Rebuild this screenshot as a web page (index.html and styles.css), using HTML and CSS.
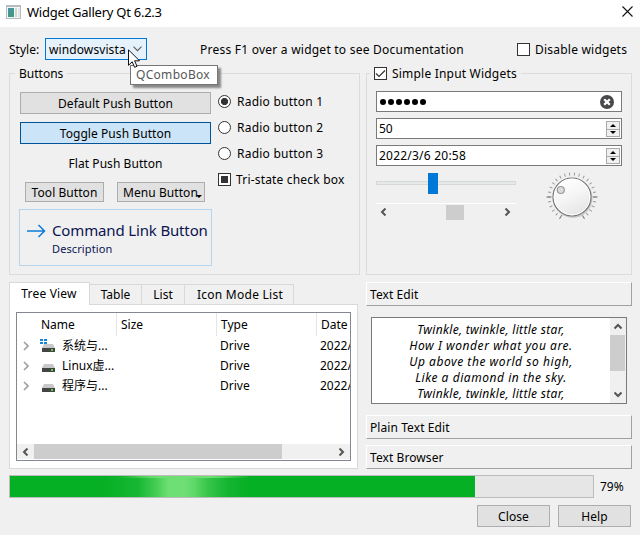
FILE: index.html
```
<!DOCTYPE html>
<html lang="en">
<head>
<meta charset="utf-8">
<title>Widget Gallery Qt 6.2.3</title>
<link rel="stylesheet" href="styles.css">
</head>
<body>
<header class="titlebar">
  <svg class="app-icon" width="15" height="14" viewBox="0 0 15 14"><defs><linearGradient id="app" x2="1" y2="1"><stop stop-color="#4f8fb0"/><stop offset="1" stop-color="#3f9e72"/></linearGradient></defs><path fill="#b5bcc0" d="M0 0h15v14H0z"/><path fill="#f5f7f7" d="M1 2h13v11H1z"/><path fill="url(#app)" d="M2 3h6v9H2z"/><path fill="#cdd8d6" d="M9 3h2v9H9z"/><path fill="#e3e7e7" d="M12 3h2v9h-2z"/></svg>
  <h1>Widget Gallery Qt 6.2.3</h1>
  <svg class="close" width="11" height="11" viewBox="0 0 11 11"><path d="M.5.5l10 10M10.500.5l-10 10" stroke="#111" stroke-width="1.1"/></svg>
</header>
<div class="topbar">
  <span class="style-label">Style:</span>
  <div class="combo"><span>windowsvista</span>
    <svg width="9" height="6" viewBox="0 0 9 6"><path d="M.5.700l4 4 4-4" fill="none" stroke="#5a5a5a" stroke-width="1.1"/></svg>
    <svg class="cursor" width="12" height="19" viewBox="0 0 12 19"><path d="M.5.800v15.500l3.700-3.500 2.400 5.500 2.400-1-2.400-5.500h4.900z" fill="#fff" stroke="#111"/></svg>
    <div class="tooltip">QComboBox</div>
  </div>
  <span class="hint">Press F1 over a widget to see Documentation</span>
  <i class="box"></i><span class="disable">Disable widgets</span>
</div>
<main class="groups">
  <section class="group buttons">
    <h2>Buttons</h2>
    <div class="push-column">
      <div class="button">Default Push Button</div>
      <div class="button on">Toggle Push Button</div>
      <div class="button flat">Flat Push Button</div>
      <div class="tools"><div class="button tool">Tool Button</div><div class="button menu">Menu Button<i></i></div></div>
      <div class="command">
        <svg width="19" height="14" viewBox="0 0 19 14"><path d="M0 7h17.500M11.500 1l6 6-6 6" fill="none" stroke="#0c7cd8" stroke-width="1.5"/></svg>
        <div><strong>Command Link Button</strong><span>Description</span></div>
      </div>
    </div>
    <div class="radios">
      <div class="option"><i class="radio checked"></i><span>Radio button 1</span></div>
      <div class="option"><i class="radio"></i><span>Radio button 2</span></div>
      <div class="option"><i class="radio"></i><span>Radio button 3</span></div>
      <div class="option tri"><i class="box partial"></i><span>Tri-state check box</span></div>
    </div>
  </section>
  <section class="group inputs">
    <h2><i class="box"><svg width="11" height="11" viewBox="0 0 11 11"><path d="M1 5.500l3 3 6-6" fill="none" stroke="#333" stroke-width="1.200"/></svg></i><span>Simple Input Widgets</span></h2>
    <div class="field password"><span class="dots"><i></i><i></i><i></i><i></i><i></i><i></i></span>
      <svg width="14" height="14" viewBox="0 0 14 14"><circle cx="7" cy="7" r="7" fill="#47484b"/><path d="M4.200 4.200l5.600 5.600M9.800 4.200L4.200 9.800" stroke="#fff" stroke-width="2.300"/></svg></div>
    <div class="field"><span class="fifty">50</span><div class="spin"><i></i><i></i></div></div>
    <div class="field"><span class="date">2022/3/6 20:58</span><div class="spin"><i></i><i></i></div></div>
    <div class="dial-row">
      <div class="sliders">
        <div class="slider"><i></i></div>
        <div class="scroll thin">
          <svg width="7" height="8" viewBox="0 0 7 8"><path d="M5.500.500L2 4l3.500 3.500" fill="none" stroke="#555" stroke-width="2"/></svg>
          <i></i>
          <svg width="7" height="8" viewBox="0 0 7 8"><path d="M1.500.500L5 4 1.500 7.500" fill="none" stroke="#555" stroke-width="2"/></svg>
        </div>
      </div>
      <svg class="dial" width="54" height="54" viewBox="-27 -27 54 54">
        <defs><linearGradient id="knob" x1=".2" x2=".7" y2="1"><stop stop-color="#fff"/><stop offset=".5" stop-color="#f5f5f5"/><stop offset="1" stop-color="#e4e4e4"/></linearGradient></defs>
        <path d="M-11.500 19.920A23 23 0 1 1 11.500 19.920" fill="none" stroke="#9a9a9a" stroke-width="3" pathLength="25" stroke-dasharray=".2 .8" stroke-dashoffset=".1"/>
        <path d="M-25.500 0h5M20.500 0h5M-12.500 22l2.500-4M12.500 22l-2.500-4" stroke="#777"/>
        <circle cx="1" cy="1.500" r="19.500" fill="#ccc"/>
        <circle r="19" fill="url(#knob)" stroke="#777" stroke-width="1.200"/>
        <circle r="17.800" fill="none" stroke="#fff"/>
        <circle cx="-11.200" cy="-7" r="3.500" fill="#dcdcdc" stroke="#999" stroke-width="1.200"/>
      </svg>
    </div>
  </section>
</main>
<div class="views">
  <section class="tabs">
    <nav><span class="tab active">Tree View</span><span class="tab table">Table</span><span class="tab list">List</span><span class="tab icons">Icon Mode List</span></nav>
    <div class="pane"><div class="tree">
      <div class="row head"><span>Name</span><span>Size</span><span>Type</span><span>Date</span></div>
      <div class="row"><span><svg class="chev" width="6" height="10" viewBox="0 0 6 10"><path d="M1 1l4 4-4 4" fill="none" stroke="#a0a0a0" stroke-width="1.700"/></svg><svg class="drive" width="16" height="14" viewBox="0 0 16 14"><path fill="#c8c8c8" d="M4 5h9l2 4H2z"/><path fill="#444" d="M2 9h13v4H2z"/><path fill="#55d83e" d="M11 10h2v2h-2z"/><path fill="#1686d9" d="M0 0h3v2H0zM4 0h3v2H4zM0 3h3v2H0zM4 3h3v2H4z"/></svg><b>系统与...</b></span><span></span><span>Drive</span><span>2022/</span></div>
      <div class="row"><span><svg class="chev" width="6" height="10" viewBox="0 0 6 10"><path d="M1 1l4 4-4 4" fill="none" stroke="#a0a0a0" stroke-width="1.700"/></svg><svg class="drive" width="16" height="14" viewBox="0 0 16 14"><path fill="#c8c8c8" d="M4 5h9l2 4H2z"/><path fill="#444" d="M2 9h13v4H2z"/><path fill="#55d83e" d="M11 10h2v2h-2z"/></svg><b>Linux虚...</b></span><span></span><span>Drive</span><span>2022/</span></div>
      <div class="row"><span><svg class="chev" width="6" height="10" viewBox="0 0 6 10"><path d="M1 1l4 4-4 4" fill="none" stroke="#a0a0a0" stroke-width="1.700"/></svg><svg class="drive" width="16" height="14" viewBox="0 0 16 14"><path fill="#c8c8c8" d="M4 5h9l2 4H2z"/><path fill="#444" d="M2 9h13v4H2z"/><path fill="#55d83e" d="M11 10h2v2h-2z"/></svg><b>程序与...</b></span><span></span><span>Drive</span><span>2022/</span></div>
      <div class="scroll wide">
        <svg width="7" height="8" viewBox="0 0 7 8"><path d="M5.500.500L2 4l3.500 3.500" fill="none" stroke="#555" stroke-width="2"/></svg>
        <i></i>
        <svg width="7" height="8" viewBox="0 0 7 8"><path d="M1.500.500L5 4 1.500 7.500" fill="none" stroke="#555" stroke-width="2"/></svg>
      </div>
    </div></div>
  </section>
  <section class="toolbox">
    <div class="tool-head">Text Edit</div>
    <div class="editor">
      <div class="verse"><p>Twinkle, twinkle, little star,</p><p class="wide-line">How I wonder what you are.</p><p class="wide-line">Up above the world so high,</p><p class="wide-line">Like a diamond in the sky.</p><p>Twinkle, twinkle, little star,</p></div>
      <div class="vscroll">
        <svg width="8" height="7" viewBox="0 0 8 7"><path d="M.500 5.500L4 2l3.500 3.500" fill="none" stroke="#555" stroke-width="2"/></svg>
        <i></i>
        <svg width="8" height="7" viewBox="0 0 8 7"><path d="M.500 1.500L4 5l3.500-3.500" fill="none" stroke="#555" stroke-width="2"/></svg>
      </div>
    </div>
    <div class="tool-head plain">Plain Text Edit</div>
    <div class="tool-head browser">Text Browser</div>
  </section>
</div>
<div class="progress"><div class="track"><i></i></div><span>79%</span></div>
<footer><div class="button">Close</div><div class="button">Help</div></footer>
</body>
</html>
```
FILE: styles.css
```
* { box-sizing: border-box; }
body { margin: 0; width: 640px; height: 535px; overflow: hidden; background: #f0f0f0; color: #000; font: 12px/16px "Noto Sans", "Noto Sans CJK SC", sans-serif; white-space: nowrap; }
h1, h2, p { margin: 0; font: inherit; }
i, svg { display: block; flex: none; }

.titlebar { display: flex; align-items: center; height: 27px; padding: 0 7px 4px 6px; background: #fff; }
.titlebar h1 { flex: 1; margin-left: 6px; font-size: 13px; letter-spacing: -.25px; }

.topbar { display: flex; align-items: center; height: 22px; margin-top: 11px; padding-left: 9px; }
.topbar > span { padding-top: 2px; }
.style-label { width: 36px; }
.combo { position: relative; display: flex; align-items: center; width: 102px; height: 22px; padding: 0 4px 0 3px; border: 1px solid #0078d7; background: #e5f1fb; }
.combo span { flex: 1; padding-top: 2px; letter-spacing: .1px; }
.cursor { position: absolute; left: 82px; top: 10px; z-index: 3; }
.tooltip { position: absolute; left: 84px; top: 26px; z-index: 2; width: 88px; height: 20px; padding-left: 5px; border: 1px solid #767676; background: #fff; color: #575757; line-height: 18px; letter-spacing: .3px; box-shadow: 3px 3px 2px #888; }
.hint { width: 317px; margin-left: 53px; letter-spacing: .235px; }
.box { width: 13px; height: 13px; border: 1px solid #333; background: #fff; }
.disable { margin-left: 5px; letter-spacing: .22px; }

.groups { display: grid; grid-template-columns: 351px 266px; gap: 6px; margin: 13px 0 0 9px; height: 202px; }
.group { border: 1px solid #dcdcdc; }
.group h2 { display: flex; align-items: center; width: max-content; height: 16px; margin-top: -9px; padding: 0 4px; background: #f0f0f0; }
.buttons { display: grid; grid-template: 16px 1fr / 193px 1fr; column-gap: 6px; padding-left: 9px; align-content: start; }
.buttons h2 { grid-column: 1 / 3; margin-left: -4px; padding-top: 2px; }
.push-column { padding-top: 2px; }
.button { display: flex; align-items: center; justify-content: center; height: 22px; padding-top: 2px; border: 1px solid #adadad; background: #e1e1e1; letter-spacing: .06px; }
.push-column > .button { margin: 0 1px 8px; }
.button.on { border-color: #00549a; background: #cce4f7; }
.push-column > .button.flat { border-color: transparent; background: none; }
.tools { display: flex; gap: 13px; padding-left: 6px; }
.tools .button { position: relative; height: 20px; }
.tool { width: 79px; }
.menu { width: 88px; padding-right: 1px; }
.menu i { position: absolute; right: 2px; bottom: 3px; border: 3px solid transparent; border-top-color: #000; border-bottom: 0; }
.command { display: flex; height: 57px; margin-top: 7px; padding: 14px 0 0 7px; border: 1px solid #b5d5ee; color: #0b1550; }
.command svg { margin-right: 6px; }
.command div { margin-top: -4px; }
.command strong, .command span { display: block; font-weight: 400; }
.command strong { font-size: 15px; line-height: 21px; letter-spacing: -.15px; }
.command span { font-size: 11px; line-height: 15px; letter-spacing: .1px; }
.radios { padding-top: 3px; }
.option { display: flex; align-items: center; height: 26px; }
.option:first-child { margin-top: -5px; }
.option span { margin-left: 6px; padding-top: 1px; letter-spacing: .23px; }
.option.tri span { margin-left: 5px; letter-spacing: .18px; }
.radio { width: 13px; height: 13px; border: 1px solid #333; border-radius: 50%; background: #fff; }
.radio.checked { background: radial-gradient(circle, #333 3.300px, #fff 3.900px); }
.partial { background: #333; box-shadow: inset 0 0 0 2px #fff; }

.inputs { padding: 0 9px; }
.inputs h2 { margin-left: -6px; }
.inputs h2 span { margin-left: 5px; padding-top: 1px; letter-spacing: .2px; }
.field { display: flex; justify-content: space-between; align-items: center; height: 21px; margin-bottom: 6px; padding: 0 1px 0 2px; border: 1px solid #7a7a7a; background: #fff; }
.date { letter-spacing: .22px; }
.password { margin-top: 10px; padding-right: 7px; }
.dots { display: flex; gap: 2px; padding-left: 1px; }
.dots i { width: 6px; height: 6px; border-radius: 50%; background: #000; }
.spin { width: 14px; height: 16px; border: 1px solid #aaa; background: #f0f0f0; }
.spin i { display: flex; height: 7px; align-items: center; justify-content: center; }
.spin i + i { border-top: 1px solid #aaa; }
.spin i::after { content: ""; border: 3px solid transparent; border-top: 0; border-bottom-color: #000; }
.spin i + i::after { border-top: 3px solid #000; border-bottom: 0; }
.dial-row { display: flex; }
.sliders { width: 140px; padding-top: 1px; }
.slider { display: flex; align-items: center; height: 21px; padding-left: 52px; background: linear-gradient(#e7eaea, #e7eaea) 1px 9px / 138px 2px no-repeat, linear-gradient(#d6d8d8, #d6d8d8) 0 8px / 100% 4px no-repeat; }
.slider i { width: 10px; height: 21px; background: #0078d7; }
.scroll { display: flex; align-items: center; justify-content: space-between; }
.thin { height: 17px; margin-top: 9px; padding: 0 5px 0 4px; border-top: 1px solid #fff; }
.thin i { width: 18px; height: 15px; margin-left: 19px; background: #cdcdcd; }
.dial { margin: -2px 0 0 29px; }

.views { display: grid; grid-template-columns: 349px 266px; gap: 8px; margin: 7px 0 0 9px; height: 187px; }
.tabs nav { display: flex; align-items: flex-end; height: 23px; }
.tab { display: flex; align-items: center; justify-content: center; height: 20px; border: 1px solid #d9d9d9; border-left: 0; border-bottom: 0; margin-bottom: 1px; padding-top: 1px; }
.tab.active { position: relative; width: 81px; height: 23px; margin: 0; padding: 0 1px 1px 0; border-left: 1px solid #d9d9d9; background: #fff; letter-spacing: .2px; }
.tab.table { width: 52px; }
.tab.list { width: 43px; }
.tab.icons { width: 109px; padding-left: 2px; letter-spacing: .25px; }
.pane { height: 165px; margin-top: -1px; padding: 7px 6px; border: 1px solid #d9d9d9; background: #fff; }
.tree { display: flex; flex-direction: column; height: 149px; border: 1px solid #828790; overflow: hidden; }
.row { display: grid; grid-template-columns: 100px 100px 100px 34px; height: 20px; align-items: center; }
.row > span { display: flex; align-items: center; padding-left: 3px; overflow: hidden; }
.row > span:first-child { padding-left: 6px; }
.row.head { height: 23px; }
.head > span { height: 23px; padding: 1px 0 0 4px; border-right: 1px solid #e5e5e5; }
.head > span:first-child { padding-left: 24px; }
.head > span:last-child { border: 0; }
.chev { margin-right: 11px; }
.drive { margin-right: 6px; }
.row b { font-weight: 400; }
.wide { height: 15px; margin-top: auto; margin-bottom: 1px; padding: 0 5px; background: #f0f0f0; }
.wide i { width: 248px; height: 15px; margin: 0 auto 0 5px; background: #cdcdcd; }

.tool-head { height: 24px; padding-left: 3px; border: 1px solid #fff; border-right-color: #a0a0a0; border-bottom-color: #a0a0a0; line-height: 23px; letter-spacing: .08px; }
.editor { display: flex; height: 87px; margin: 11px 5px; border: 1px solid #7a7a7a; background: #fff; overflow: hidden; }
.verse { flex: 1; padding-top: 4px; text-align: center; font-style: italic; letter-spacing: .3px; }
.wide-line { letter-spacing: .55px; }
.vscroll { display: flex; flex-direction: column; align-items: center; width: 16px; padding: 5px 1px 5px 0; background: #f0f0f0; }
.vscroll i { width: 15px; height: 36px; margin: 5px 0 auto; background: #cdcdcd; }
.browser { margin-top: 6px; }

.progress { display: flex; align-items: center; height: 23px; margin: 6px 0 0 9px; }
.track { width: 585px; height: 23px; border: 1px solid #bcbcbc; background: #e6e6e6; }
.track i { width: 465px; height: 21px; background: linear-gradient(90deg, transparent 110px, #6fdf72 150px, #6fdf72 200px, transparent 240px) 0 0 / 100% 2px no-repeat, linear-gradient(90deg, #06b025 95px, #17b733 128px, #45cd54 146px, #6cdf73 158px, #6fdf76 174px, #5fd968 184px, #35c549 198px, #14b530 218px, #06b025 238px); }
.progress span { margin-left: 6px; }
footer { display: flex; gap: 8px; margin: 7px 0 0 477px; }
footer .button { width: 73px; }
```
